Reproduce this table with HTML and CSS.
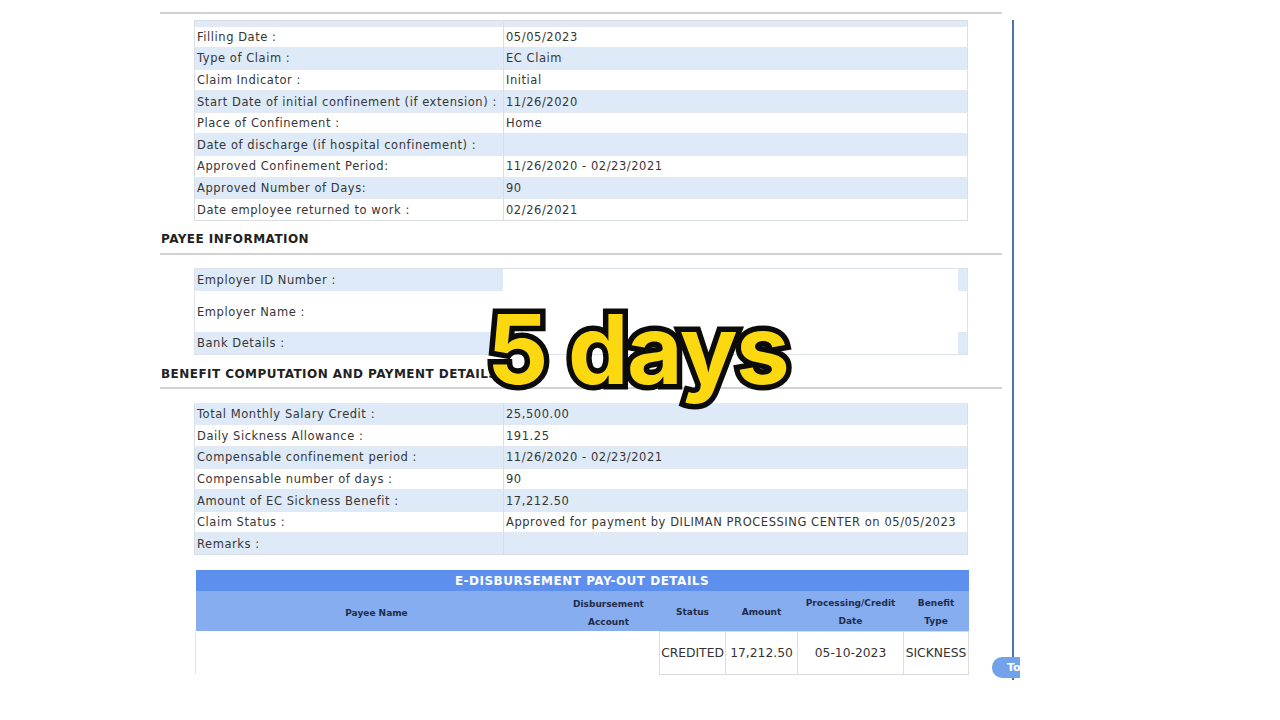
FILE: index.html
```html
<!DOCTYPE html>
<html lang="en">
<head>
<meta charset="utf-8">
<title>EC Sickness Claim</title>
<link rel="stylesheet" href="styles.css">
</head>
<body>
<div class="frame">
  <div class="main">
    <hr class="rule rule-top">
    <table class="info">
      <tr class="stub"><td class="lab"></td><td class="val"></td></tr>
      <tr><td class="lab">Filling Date :</td><td class="val">05/05/2023</td></tr>
      <tr class="alt"><td class="lab">Type of Claim :</td><td class="val">EC Claim</td></tr>
      <tr><td class="lab">Claim Indicator :</td><td class="val">Initial</td></tr>
      <tr class="alt"><td class="lab">Start Date of initial confinement (if extension) :</td><td class="val">11/26/2020</td></tr>
      <tr><td class="lab">Place of Confinement :</td><td class="val">Home</td></tr>
      <tr class="alt"><td class="lab">Date of discharge (if hospital confinement) :</td><td class="val"></td></tr>
      <tr><td class="lab">Approved Confinement Period:</td><td class="val">11/26/2020 - 02/23/2021</td></tr>
      <tr class="alt"><td class="lab">Approved Number of Days:</td><td class="val">90</td></tr>
      <tr><td class="lab">Date employee returned to work :</td><td class="val">02/26/2021</td></tr>
    </table>

    <h2 class="section sec-payee">PAYEE INFORMATION</h2>
    <hr class="rule rule-payee">
    <table class="info payee">
      <tr class="r1"><td class="lab blue">Employer ID Number :</td><td class="val"></td><td class="edge blue"></td></tr>
      <tr class="r2"><td class="lab">Employer Name :</td><td class="val"></td><td class="edge"></td></tr>
      <tr class="r3"><td class="lab blue">Bank Details :</td><td class="val"></td><td class="edge blue"></td></tr>
    </table>

    <h2 class="section sec-benefit">BENEFIT COMPUTATION AND PAYMENT DETAILS</h2>
    <hr class="rule rule-benefit">
    <table class="info benefit">
      <tr class="alt"><td class="lab">Total Monthly Salary Credit :</td><td class="val">25,500.00</td></tr>
      <tr><td class="lab">Daily Sickness Allowance :</td><td class="val">191.25</td></tr>
      <tr class="alt"><td class="lab">Compensable confinement period :</td><td class="val">11/26/2020 - 02/23/2021</td></tr>
      <tr><td class="lab">Compensable number of days :</td><td class="val">90</td></tr>
      <tr class="alt"><td class="lab">Amount of EC Sickness Benefit :</td><td class="val">17,212.50</td></tr>
      <tr><td class="lab">Claim Status :</td><td class="val">Approved for payment by DILIMAN PROCESSING CENTER on 05/05/2023</td></tr>
      <tr class="alt"><td class="lab">Remarks :</td><td class="val"></td></tr>
    </table>

    <table class="disb">
      <colgroup>
        <col class="c-name"><col class="c-acct"><col class="c-stat"><col class="c-amt"><col class="c-date"><col class="c-type">
      </colgroup>
      <tr class="title"><th colspan="6">E-DISBURSEMENT PAY-OUT DETAILS</th></tr>
      <tr class="head">
        <th>Payee Name</th>
        <th>Disbursement<br>Account</th>
        <th>Status</th>
        <th>Amount</th>
        <th>Processing/Credit<br>Date</th>
        <th>Benefit<br>Type</th>
      </tr>
      <tr class="data">
        <td class="plain first"></td>
        <td class="plain"></td>
        <td>CREDITED</td>
        <td>17,212.50</td>
        <td>05-10-2023</td>
        <td>SICKNESS</td>
      </tr>
    </table>
  </div>
  <div class="rail"></div>
  <button class="to-top" type="button">To</button>
</div>
<div class="caption">5 days</div>
</body>
</html>
```

FILE: styles.css
```css
html, body {
  margin: 0;
  padding: 0;
  background: #ffffff;
}
body {
  width: 1280px;
  height: 720px;
  position: relative;
  overflow: hidden;
  font-family: "DejaVu Sans", Verdana, sans-serif;
  color: #363636;
}
.frame {
  margin-left: 160px;
  width: 860px;
  height: 720px;
  display: flex;
  position: relative;
  overflow: hidden;
}
.main {
  width: 842px;
  display: flex;
  flex-direction: column;
}
.rule {
  border: 0;
  height: 2px;
  background: #d2d2d2;
  margin: 0;
  width: 842px;
}
.rule-top {
  margin-top: 12px;
  margin-bottom: 6px;
}
.info {
  margin-left: 34px;
  width: 774px;
  border-collapse: collapse;
  font-size: 11.5px;
  letter-spacing: 0.55px;
  border: 1px solid #d9dee5;
}
.info td {
  height: 21.6px;
  padding: 0 2px;
  box-sizing: border-box;
  border-top: 1px solid #e4e9ef;
  white-space: nowrap;
}
.info .lab {
  width: 309px;
  border-right: 1px solid #d9dee5;
}
.info tr.alt td,
.info td.blue {
  background: #dfeaf8;
}
.info tr.stub td {
  height: 5.5px;
  background: #dfeaf8;
  border-top: 0;
}
.section {
  margin: 0;
  font-size: 12px;
  letter-spacing: 0.45px;
  font-weight: bold;
  color: #222222;
  height: 18px;
  line-height: 18px;
  padding-left: 1px;
  white-space: nowrap;
}
.sec-payee {
  margin-top: 9px;
  margin-bottom: 5px;
}
.rule-payee {
  margin-bottom: 13px;
}
.sec-benefit {
  margin-top: 10px;
  margin-bottom: 4px;
}
.rule-benefit {
  margin-bottom: 14px;
}
.payee {
  border: 1px solid #dde2e8;
}
.payee td {
  border-top: 0;
}
.payee .lab {
  border-right: 0;
  width: 308px;
}
.payee .edge {
  width: 10px;
  padding: 0;
}
.payee tr.r1 td { height: 23px; }
.payee tr.r2 td { height: 41px; }
.payee tr.r3 td { height: 22px; }
.disb {
  margin-top: 15px;
  margin-left: 35px;
  width: 773px;
  table-layout: fixed;
  border-collapse: collapse;
}
.disb .title th {
  background: #5c8fee;
  color: #ffffff;
  font-size: 12px;
  font-weight: bold;
  height: 21px;
  padding: 0;
  letter-spacing: 0.5px;
}
.disb .head th {
  background: #86adef;
  color: #1f2c48;
  font-size: 9px;
  font-weight: bold;
  height: 40px;
  box-sizing: border-box;
  padding: 3px 0 0;
  line-height: 18px;
}
.c-name { width: 362px; }
.c-acct { width: 102px; }
.c-stat { width: 66px; }
.c-amt { width: 72px; }
.c-date { width: 106px; }
.c-type { width: 65px; }
.disb .data td {
  height: 42px;
  padding: 0;
  text-align: center;
  font-size: 12.3px;
  color: #333333;
  border: 1px solid #dcdcdc;
  white-space: nowrap;
  overflow: hidden;
}
.disb .data td.plain {
  border: 0;
}
.disb .data td.first {
  border-left: 1px solid #e6e6e6;
}
.rail {
  margin-left: 10px;
  margin-top: 20px;
  width: 2px;
  height: 660px;
  background: #4d6fb3;
}
.to-top {
  position: absolute;
  left: 832px;
  top: 657px;
  width: 50px;
  height: 21px;
  border: 0;
  border-radius: 10px;
  background: #72a2ea;
  color: #ffffff;
  font-family: "DejaVu Sans", sans-serif;
  font-size: 11px;
  font-weight: bold;
  text-align: left;
  padding: 0 0 0 15px;
}
.caption {
  position: absolute;
  left: 487px;
  top: 294px;
  font-family: Inter, "Noto Sans", sans-serif;
  font-weight: 700;
  font-size: 96px;
  line-height: 110px;
  color: #fbd80f;
  -webkit-text-stroke: 11px #0b0b0b;
  paint-order: stroke fill;
  letter-spacing: -1.5px;
  white-space: nowrap;
}
```
